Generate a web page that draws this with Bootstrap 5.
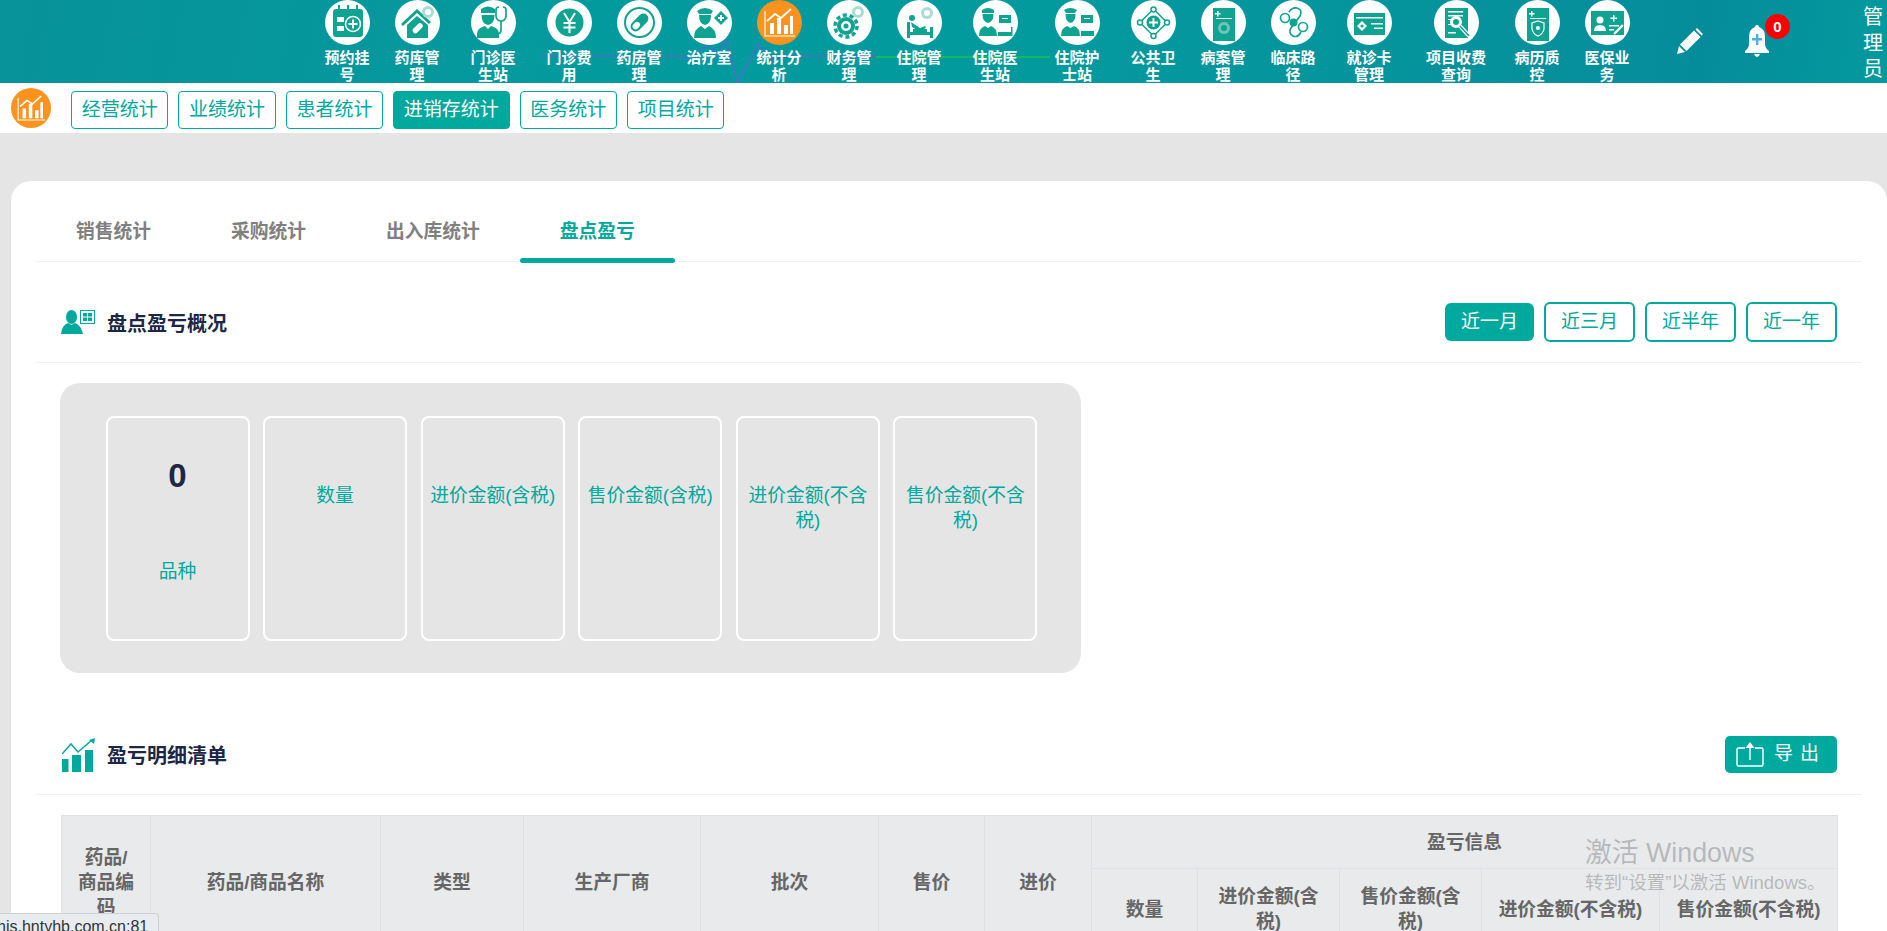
<!DOCTYPE html>
<html lang="zh-CN">
<head>
<meta charset="utf-8">
<title>统计分析</title>
<link href="https://cdn.jsdelivr.net/npm/bootstrap@5.3.0/dist/css/bootstrap.min.css" rel="stylesheet">
<style>
html,body{height:931px;overflow:hidden}
body{background:#e5e5e5;font-family:"Liberation Sans","Noto Sans CJK SC",sans-serif;color:#1d2744;position:relative}
.top-bar{height:83px;padding-left:312px;position:relative;overflow:hidden;background:linear-gradient(100deg,#08929a 0%,#039a9e 30%,#039a9e 55%,#06929c 78%,#058c9b 90%,#049a9e 100%)}
.ecg{position:absolute;left:0;top:0}
.mod{position:relative;width:70px;flex:none;text-align:center;color:#fff}
.mod-82{width:82px}.mod-92{width:92px}
.disc{width:45px;height:45px;border-radius:50%;background:#fff;margin:0 auto;display:block;fill:#0fa391}
.disc-on{background:#fb931e;fill:#fff}
.mod-text{display:block;width:46px;margin:4px auto 0;font-size:15px;line-height:17px;font-weight:700}
.mod-92 .mod-text{width:62px}
.tools{position:relative;color:#fff}
.pen{margin:28px 42px 0 35px;width:26px;height:26px;fill:#fff}
.bell-box{position:relative;width:24px;margin:25px 94px 0 0;height:34px}
.bell-num{position:absolute;left:20px;top:-11px;width:25px;height:25px;border-radius:50%;background:#f00;color:#fff;font-size:15px;font-weight:700;line-height:25px;text-align:center}
.who{width:20px;margin-top:4px;font-size:20px;line-height:26px;color:#fff}
.sub-bar{height:50px;background:#fff;padding-left:11px;gap:10px}
.sub-logo{width:40px;height:40px;margin-top:5px;border-radius:50%;background:#fb931e;fill:#fff;margin-right:10px;flex:none}
.sub-btn{height:38px;margin-top:8px;padding:0 9.7px;font-size:19px;line-height:36px;color:#00a99d;background:#fff;border:1px solid #00a99d;border-radius:4px}
.sub-btn-on{background:#00a99d;color:#fff}
.sheet{margin:48px 0 0 11px;background:#fff;border-radius:20px 20px 0 0;padding:0 25px;height:760px}
.tabs-line{height:81px;border-bottom:1px solid #f0f0f5;padding-top:38px}
.tab-item{position:relative;padding:0 40px;font-size:18.75px;line-height:25px;font-weight:700;color:#808080}
.tab-on{color:#00a99d}
.tab-on::after{content:"";position:absolute;left:0;right:0;top:39px;height:5px;border-radius:3px;background:#00a99d}
.sec-head{padding:40px 25px 20px;border-bottom:1px solid #f0f0f5}
.sec-head-b{padding:63px 25px 21px 26px}
.sec-title{font-size:20px;font-weight:700;line-height:28px;color:#1d2744;margin-left:12px;padding-top:3px}
.sec-ic{fill:#00a99d;flex:none}
.range-row{gap:10px}
.range-btn{width:91px;height:40px;padding:0;font-size:19px;line-height:36px;color:#00a99d;background:#fff;border:2px solid #00a99d;border-radius:6px}
.range-on{width:89px;height:38px;background:#00a99d;color:#fff;border:0;line-height:38px}
.stat-panel{margin:20px 0 0 24px;width:1021px;height:290px;padding:33px 44px 32px 45.5px;gap:13.6px;background:#e5e5e5;border-radius:20px}
.stat-cell{width:144px;height:225px;flex:none;padding:20px 6px 0;border:2px solid #fff;border-radius:8px;text-align:center}
.stat-num{font-size:33px;font-weight:700;line-height:76px;color:#1d2744}
.stat-name{margin-top:44.5px;font-size:18.75px;line-height:25px;color:#00a99d}
.export-btn{width:112px;height:37px;padding:0;background:#00a99d;color:#fff;border:0;border-radius:5px;font-size:19px;letter-spacing:7px;gap:10px}
.grid-wrap{margin:20px 0 0 25px;width:1776px}
.grid-wrap .table{table-layout:fixed;margin:0;--bs-table-bg:#e9eaec;--bs-table-color:#666;--bs-table-border-color:#dee0e5}
.grid-wrap th{padding:0 10px;font-size:18.75px;line-height:25px;font-weight:700;text-align:center;vertical-align:middle;border-width:1px}
.grid-wrap th.cell-code{padding:0 15px}
.row-a{height:53px}.row-b{height:81px}
.win-mark{position:absolute;left:1585px;top:836px;color:rgba(110,112,115,.42);line-height:1}
.win-a{font-size:26.8px;line-height:34px}
.win-b{font-size:18.5px;line-height:24px;margin-top:1px;white-space:nowrap}
.link-tip{position:absolute;left:0;top:913px;width:159px;height:22px;overflow:hidden;background:#e9ecef;border:1px solid #ced0d2;border-left:0;border-bottom:0;border-radius:0 4px 0 0;color:#333;font-size:16px;line-height:26px;white-space:nowrap;text-indent:-3px}
</style>
</head>
<body>
<header class="top-bar d-flex">
  <svg class="ecg" width="1887" height="83" fill="none" stroke-width="1.6"><path d="M540 56H680L690 60 708 44 718 56 726 38 737 83 758 44 772 60 790 56H876" stroke="#4b6fd0" stroke-opacity=".85"/><path d="M876 57H1050" stroke="#16bf55" stroke-width="2" stroke-opacity=".8"/></svg>

  <div class="mod"><svg class="disc" viewBox="0 0 45 45"><rect x="8" y="9" width="30" height="28" rx="3"/><path d="M13 5h2v7h-2zM22 5h2v7h-2zM31 5h2v7h-2z"/><path fill="#fff" d="M12 17h7v5h-7zM12 26h7v5h-7z"/><circle cx="28" cy="24" r="7.5" fill="none" stroke="#fff" stroke-width="1.6"/><path fill="#fff" d="M27 19.500h2V23h3.500v2H29v3.500h-2V25h-3.500v-2H27z"/></svg><span class="mod-text">预约挂号</span></div>

  <div class="mod"><svg class="disc" viewBox="0 0 45 45"><path d="M12 25 22 16l11 9v13H12z"/><path d="M7 25 22 11l13 12" fill="none" stroke="#0fa391" stroke-width="3"/><rect x="16.500" y="25.500" width="12" height="5.500" rx="2.700" fill="#fff" transform="rotate(-45 22.500 28)"/><circle cx="33" cy="12" r="6" fill="#a9dcd5"/><circle cx="33" cy="12" r="3" fill="#fff"/></svg><span class="mod-text">药库管理</span></div>

  <div class="mod mod-82"><svg class="disc" viewBox="0 0 45 45"><path d="M10 9q7-5 14 0v4H10z"/><path d="M10.500 15h13q0 9-6.500 10-6.500-1-6.500-10z"/><path d="M6 38v-4q0-6 8-8l3 3 3-3q8 2 8 8v4z"/><path d="M28 7q-3 0-3 3v6a5 5 0 0 0 10 0v-6q0-3-3-3M30 21v9q0 3-3 4" fill="none" stroke="#0fa391" stroke-width="1.700"/></svg><span class="mod-text">门诊医生站</span></div>

  <div class="mod"><svg class="disc" viewBox="0 0 45 45"><circle cx="22.500" cy="22.500" r="14"/><path d="M17 13l5.500 9 5.500-9M22.500 22v11M16.500 23h12M16.500 27.500h12" fill="none" stroke="#fff" stroke-width="2"/></svg><span class="mod-text">门诊费用</span></div>

  <div class="mod"><svg class="disc" viewBox="0 0 45 45"><circle cx="22.500" cy="22.500" r="14.500" fill="none" stroke="#0fa391" stroke-width="2"/><g transform="rotate(-45 22.500 22.500)"><rect x="12" y="17.500" width="21" height="10" rx="5"/><rect x="14" y="19.500" width="8" height="6" rx="3" fill="#fff"/></g></svg><span class="mod-text">药房管理</span></div>

  <div class="mod"><svg class="disc" viewBox="0 0 45 45"><path d="M10 11q8-6 16 0l-2 3H12z"/><path d="M12 15h12q0 9-6 10-6-1-6-10z"/><path d="M7 38q0-9 7-12l4 3 4-3q7 3 7 12z"/><path d="M34 11l7 7-7 7-7-7z"/><path fill="#fff" d="M33 15h2v2h2v2h-2v2h-2v-2h-2v-2h2z"/></svg><span class="mod-text">治疗室</span></div>

  <div class="mod"><svg class="disc disc-on" viewBox="0 0 45 45"><path d="M8 11v25h30" fill="none" stroke="#fff" stroke-width="1.200"/><path d="M13 23h4v11h-4zM20 18h4v16h-4zM27 25h4v9h-4zM33 16h3v18h-3z"/><path d="M10 21l8-7 6 4 10-9" fill="none" stroke="#fff" stroke-width="1.800"/></svg><span class="mod-text">统计分析</span></div>

  <div class="mod"><svg class="disc" viewBox="0 0 45 45"><circle cx="19" cy="26" r="11" fill="none" stroke="#0fa391" stroke-width="3.500" stroke-dasharray="4 2.900"/><circle cx="19" cy="26" r="9"/><circle cx="19" cy="26" r="5" fill="#fff"/><circle cx="19" cy="26" r="2.500"/><circle cx="31" cy="12" r="6" fill="#a9dcd5"/><circle cx="31" cy="12" r="3" fill="#fff"/></svg><span class="mod-text">财务管理</span></div>

  <div class="mod"><svg class="disc" viewBox="0 0 45 45"><circle cx="15" cy="18" r="3"/><path d="M14 22l9 6 5-2 1 2-7 3-7-4z"/><path d="M10 22h3v10h20v-5h3v11h-3v-3H13v3h-3z"/><path d="M16 29h14v3H16z"/><circle cx="30" cy="13" r="6" fill="#a9dcd5"/><circle cx="30" cy="13" r="3" fill="#fff"/></svg><span class="mod-text">住院管理</span></div>

  <div class="mod mod-82"><svg class="disc" viewBox="0 0 45 45"><path d="M9 10q6-4 12 0v3H9z"/><path d="M9.500 14h11q0 8-5.500 9-5.500-1-5.500-9z"/><path d="M6 36q0-8 6-10l3 2 3-2q6 2 6 10z"/><path d="M26 15h12v8H26z"/><path d="M29 18h6v1h-6z" fill="#fff"/><path d="M25 32h14v4H25zM38 27h1.500v9H38z"/></svg><span class="mod-text">住院医生站</span></div>

  <div class="mod mod-82"><svg class="disc" viewBox="0 0 45 45"><path d="M9 10q6-4 13 0l-2 3H11z"/><path d="M10.500 14h10q0 8-5 9-5-1-5-9z"/><path d="M6 36q0-8 6-10l3.500 2 3.500-2q6 2 6 10z"/><path d="M26 15h12v8H26z"/><path d="M29 18h6v1h-6z" fill="#fff"/><path d="M26 31h13v5H26z"/></svg><span class="mod-text">住院护士站</span></div>

  <div class="mod"><svg class="disc" viewBox="0 0 45 45"><path d="M22.500 9 36 22.500 22.500 36 9 22.500z" fill="none" stroke="#0fa391" stroke-width="1.500"/><circle cx="22.500" cy="9.500" r="2.500" fill="#fff" stroke="#0fa391" stroke-width="1.500"/><circle cx="22.500" cy="36" r="2.500" fill="#fff" stroke="#0fa391" stroke-width="1.500"/><circle cx="9" cy="22.500" r="2.500" fill="#fff" stroke="#0fa391" stroke-width="1.500"/><circle cx="36" cy="22.500" r="2.500" fill="#fff" stroke="#0fa391" stroke-width="1.500"/><circle cx="22.500" cy="22.500" r="7"/><path fill="#fff" d="M21.500 18h2v3.500H27v2h-3.500V27h-2v-3.500H18v-2h3.500z"/></svg><span class="mod-text">公共卫生</span></div>

  <div class="mod"><svg class="disc" viewBox="0 0 45 45"><rect x="12" y="8" width="22" height="33"/><path fill="#fff" d="M16 11h1.500v2h2v1.500h-2v2H16v-2h-2V13h2zM15 18h16v1H15z"/><circle cx="23" cy="28" r="6" fill="#6fc4b9"/><circle cx="23" cy="28" r="3" fill="#0fa391"/></svg><span class="mod-text">病案管理</span></div>

  <div class="mod"><svg class="disc" viewBox="0 0 45 45"><path d="M18 12q3-5 8-4 6 2 3 8l-9 12q-3 5 2 8 5 2 8-4" fill="none" stroke="#0fa391" stroke-width="1.700"/><circle cx="14" cy="18" r="4.500" fill="#fff" stroke="#0fa391" stroke-width="1.700"/><circle cx="32" cy="27" r="4.500" fill="#fff" stroke="#0fa391" stroke-width="1.700"/><circle cx="22.500" cy="22.500" r="4"/></svg><span class="mod-text">临床路径</span></div>

  <div class="mod mod-82"><svg class="disc" viewBox="0 0 45 45"><rect x="7" y="13" width="31" height="22"/><path fill="#fff" d="M9 17h27v1.500H9zM24 23h12v1.500H24zM27 27.500h9V29h-9z"/><path fill="#fff" d="M15 21l5 5-5 5-5-5z"/><circle cx="15" cy="26" r="1.500"/></svg><span class="mod-text">就诊卡管理</span></div>

  <div class="mod mod-92"><svg class="disc" viewBox="0 0 45 45"><rect x="11" y="8" width="23" height="30"/><path fill="#fff" d="M14 11h15v1.500H14zM14 15h15v1.500H14zM14 32h8v1.500h-8z"/><circle cx="22" cy="22" r="6" fill="#fff"/><circle cx="22" cy="22" r="3"/><path d="M14 19h3v1h-3zM14 24h3v1h-3z" fill="#fff"/><path d="M26 26l9 10" stroke="#fff" stroke-width="4"/><path d="M26 26l9 10" stroke="#0fa391" stroke-width="1.500"/></svg><span class="mod-text">项目收费查询</span></div>

  <div class="mod"><svg class="disc" viewBox="0 0 45 45"><rect x="12" y="8" width="22" height="33"/><path fill="#fff" d="M16 11h1.500v2h2v1.500h-2v2H16v-2h-2V13h2zM15 18h16v1H15z"/><path d="M23 21l6 2v6q-1 5-6 7-5-2-6-7v-6z" fill="none" stroke="#fff" stroke-width="1.200"/><circle cx="23" cy="28" r="2" fill="#fff"/></svg><span class="mod-text">病历质控</span></div>

  <div class="mod"><svg class="disc" viewBox="0 0 45 45"><rect x="6" y="11" width="33" height="24"/><circle cx="15" cy="20" r="3.500" fill="#fff"/><path fill="#fff" d="M9 31q0-6 6-6t6 6zM28 15h1.500v2.500H32V19h-2.500v2.500H28V19h-2.500v-1.500H28zM24 25h10v1.500H24zM24 29h5v1.500h-5z"/><path d="M29 32l8-8 2 2-8 8-3 1z" fill="#fff" stroke="#0fa391" stroke-width=".6"/></svg><span class="mod-text">医保业务</span></div>

  <svg class="pen tools flex-none" viewBox="0 0 26 26"><path d="M0 26l2-8 6 6zM3 16.500 17 2.500 23.500 9 9.500 23zM18.500 1.500 20 0l6 6-1.500 1.500z"/></svg>
  <div class="bell-box tools flex-none">
    <svg width="24" height="34" viewBox="0 0 24 34"><path fill="#fff" d="M12 0q2 0 2 2 6 2 6 10v7q0 4 4 7v2H0v-2q4-3 4-7v-7q0-8 6-10 0-2 2-2z"/><path fill="#fff" d="M9 29h6q-1 3-3 3t-3-3z"/><path fill="#4ab0e0" d="M11 9h2.400v4H17v2.400h-3.600V20H11v-4.600H7V13h4z"/></svg>
    <span class="bell-num">0</span>
  </div>
  <div class="who tools flex-none">管理员</div>
</header>

<nav class="sub-bar d-flex align-items-start">
  <svg class="sub-logo" viewBox="0 0 45 45"><path d="M8 11v25h30" fill="none" stroke="#fff" stroke-width="1.200"/><path d="M13 23h4v11h-4zM20 18h4v16h-4zM27 25h4v9h-4zM33 16h3v18h-3z"/><path d="M10 21l8-7 6 4 10-9" fill="none" stroke="#fff" stroke-width="1.800"/></svg>
  <button class="btn sub-btn">经营统计</button>
  <button class="btn sub-btn">业绩统计</button>
  <button class="btn sub-btn">患者统计</button>
  <button class="btn sub-btn sub-btn-on">进销存统计</button>
  <button class="btn sub-btn">医务统计</button>
  <button class="btn sub-btn">项目统计</button>
</nav>

<main class="sheet">
  <div class="tabs-line d-flex">
    <div class="tab-item">销售统计</div>
    <div class="tab-item">采购统计</div>
    <div class="tab-item">出入库统计</div>
    <div class="tab-item tab-on">盘点盈亏</div>
  </div>

  <div class="sec-head d-flex align-items-center">
    <svg class="sec-ic" width="34" height="24" viewBox="0 0 34 24"><ellipse cx="10.500" cy="7" rx="5.500" ry="7"/><path d="M0 24q1-9 7-11l3.500 2 3.500-2q6 2 8 11z"/><rect x="19.500" y=".5" width="14" height="13" fill="#fff" stroke="#00a99d"/><path d="M22 3h4v3.500h-4zM27 3h4v3.500h-4zM22 7.500h4V11h-4zM27 7.500h4V11h-4z"/></svg>
    <div class="sec-title flex-grow-1">盘点盈亏概况</div>
    <div class="range-row d-flex align-items-center">
      <button class="btn range-btn range-on">近一月</button>
      <button class="btn range-btn">近三月</button>
      <button class="btn range-btn">近半年</button>
      <button class="btn range-btn">近一年</button>
    </div>
  </div>

  <section class="stat-panel d-flex">
    <div class="stat-cell"><div class="stat-num">0</div><div class="stat-name">品种</div></div>
    <div class="stat-cell"><div class="stat-name">数量</div></div>
    <div class="stat-cell"><div class="stat-name">进价金额(含税)</div></div>
    <div class="stat-cell"><div class="stat-name">售价金额(含税)</div></div>
    <div class="stat-cell"><div class="stat-name">进价金额(不含税)</div></div>
    <div class="stat-cell"><div class="stat-name">售价金额(不含税)</div></div>
  </section>

  <div class="sec-head sec-head-b d-flex align-items-center">
    <svg class="sec-ic" width="33" height="34" viewBox="0 0 33 34"><path d="M0 21h6.500v13H0zM10 17h9v17h-9zM23 12h8v22h-8z"/><path d="M0 16 9 6l7 8L30 2" fill="none" stroke="#00a99d" stroke-width="1.500"/><path d="M33 0l-1 6-5-4z"/></svg>
    <div class="sec-title flex-grow-1">盈亏明细清单</div>
    <button class="btn export-btn d-flex align-items-center justify-content-center">
      <svg width="28" height="25" viewBox="0 0 28 25" fill="none" stroke="#fff" stroke-width="1.400"><path d="M9 6H2.500Q1 6 1 7.500v15Q1 24 2.500 24h23q1.500 0 1.500-1.500v-15Q27 6 25.500 6H19"/><path d="M14 18V3"/><path d="M14 0l4.500 6h-9z" fill="#fff" stroke="none"/></svg>
      <span>导出</span>
    </button>
  </div>

  <div class="grid-wrap">
    <table class="table table-bordered">
      <colgroup>
        <col width="89"><col width="230"><col width="143"><col width="177"><col width="178"><col width="106"><col width="107"><col width="106"><col width="142"><col width="142"><col width="178"><col width="178">
      </colgroup>
      <thead>
        <tr class="row-a">
          <th rowspan="2" class="cell-code">药品/商品编码</th>
          <th rowspan="2">药品/商品名称</th>
          <th rowspan="2">类型</th>
          <th rowspan="2">生产厂商</th>
          <th rowspan="2">批次</th>
          <th rowspan="2">售价</th>
          <th rowspan="2">进价</th>
          <th colspan="5">盈亏信息</th>
        </tr>
        <tr class="row-b">
          <th>数量</th>
          <th>进价金额(含税)</th>
          <th>售价金额(含税)</th>
          <th>进价金额(不含税)</th>
          <th>售价金额(不含税)</th>
        </tr>
      </thead>
    </table>
  </div>
</main>

<div class="win-mark"><div class="win-a">激活 Windows</div><div class="win-b">转到“设置”以激活 Windows。</div></div>
<div class="link-tip">his.hntyhb.com.cn:81</div>
</body>
</html>
